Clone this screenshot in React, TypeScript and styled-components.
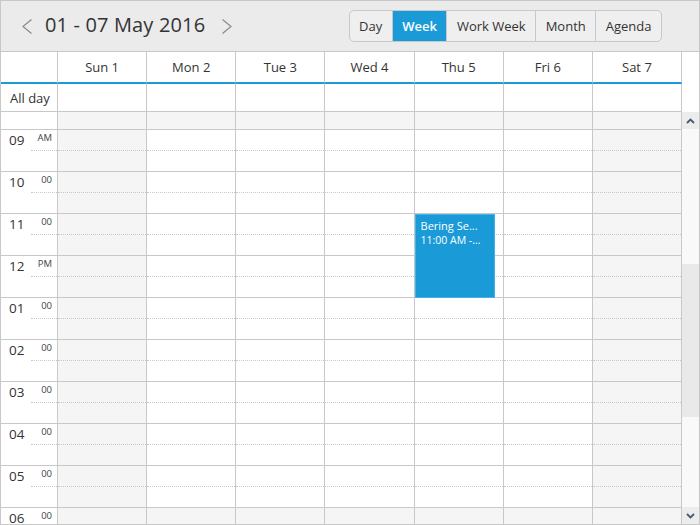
import React from "react";
import styled, { createGlobalStyle } from "styled-components";

const LINE = "#c8c8c8";
const BLUE = "#1a9bd7";
const FONT = '"Open Sans", "Segoe UI", "Noto Sans", sans-serif';

const GlobalStyle = createGlobalStyle`
  html, body { margin: 0; padding: 0; background: #fff; }
  * { box-sizing: border-box; }
`;

const Scheduler = styled.div`
  width: 700px;
  height: 525px;
  border: 1px solid ${LINE};
  display: flex;
  flex-direction: column;
  overflow: hidden;
  font-family: ${FONT};
  color: #333;
`;

const Toolbar = styled.div`
  height: 51px;
  flex: none;
  background: #ebebeb;
  border-bottom: 1px solid ${LINE};
  display: flex;
  align-items: center;
  justify-content: space-between;
  padding: 0 37px 0 21px;
`;

const DateNav = styled.div`
  display: flex;
  align-items: center;
`;

const NavArrow = styled.button`
  border: 0;
  background: transparent;
  padding: 0;
  width: 10px;
  height: 16px;
  display: flex;
  align-items: center;
  justify-content: center;
  cursor: pointer;
`;

const DateText = styled.div`
  font-size: 20px;
  line-height: 24px;
  padding-bottom: 3px;
  color: #333;
  margin: 0 17px 0 13px;
  letter-spacing: 0.15px;
`;

const ViewGroup = styled.div`
  display: flex;
  height: 32px;
  border: 1px solid ${LINE};
  border-radius: 5px;
  overflow: hidden;
  background: #efefef;
`;

const ViewButton = styled.button<{ $active?: boolean }>`
  border: 0;
  border-left: 1px solid ${LINE};
  &:first-child { border-left: 0; }
  padding: 0 9.5px;
  font-family: ${FONT};
  font-size: 13px;
  font-weight: ${(p) => (p.$active ? 600 : 400)};
  color: ${(p) => (p.$active ? "#fff" : "#333")};
  background: ${(p) => (p.$active ? BLUE : "transparent")};
  cursor: pointer;
`;

const HeaderRow = styled.div`
  display: flex;
  flex: none;
  height: 32px;
`;

const AllDayRow = styled.div`
  display: flex;
  flex: none;
  height: 28px;
`;

const CornerCell = styled.div<{ $accent?: boolean }>`
  width: 57px;
  flex: none;
  border-right: 1px solid ${LINE};
  border-bottom: ${(p) => (p.$accent ? `2px solid ${BLUE}` : `1px solid ${LINE}`)};
  display: flex;
  align-items: center;
  padding-left: 9px;
  font-size: 13px;
`;

const DayHeader = styled.div<{ $accent?: boolean }>`
  flex: 1;
  min-width: 0;
  border-right: 1px solid ${LINE};
  border-bottom: ${(p) => (p.$accent ? `2px solid ${BLUE}` : `1px solid ${LINE}`)};
  display: flex;
  align-items: center;
  justify-content: center;
  padding-bottom: 1px;
  font-size: 13px;
  color: #333;
  background: #fff;
`;

const SideSpacer = styled.div`
  width: 17px;
  flex: none;
  background: #fff;
`;

const Body = styled.div`
  flex: 1;
  min-height: 0;
  display: flex;
`;

const Grid = styled.div`
  flex: 1;
  min-width: 0;
  overflow: hidden;
`;

const GridInner = styled.div<{ $offset: number }>`
  margin-top: ${(p) => -p.$offset}px;
`;

const Row = styled.div`
  display: flex;
`;

const TimeCell = styled.div<{ $half?: boolean }>`
  width: 57px;
  flex: none;
  height: ${(p) => (p.$half ? 21 : 42)}px;
  border-right: 1px solid ${LINE};
  border-bottom: 1px solid ${LINE};
  display: flex;
  background: #fff;
`;

const MajorLabel = styled.div`
  width: 30px;
  flex: none;
  padding: 1px 0 0 8px;
  font-size: 13.5px;
  line-height: 18px;
  color: #333;
`;

const MinorArea = styled.div`
  flex: 1;
`;

const MinorLabel = styled.div`
  height: 21px;
  border-bottom: 1px dotted ${LINE};
  text-align: right;
  padding: 2px 5px 0 0;
  font-size: 9.5px;
  line-height: 12px;
  color: #444;
`;

const DayCell = styled.div`
  flex: 1;
  min-width: 0;
  border-right: 1px solid ${LINE};
  position: relative;
`;

const Slot = styled.div<{ $work: boolean; $last: boolean }>`
  height: 21px;
  background: ${(p) => (p.$work ? "#fff" : "#f5f5f5")};
  border-bottom: 1px ${(p) => (p.$last ? "solid" : "dotted")} ${LINE};
`;

const Event = styled.div`
  position: absolute;
  top: 0;
  left: 0;
  width: 80px;
  height: 84px;
  background: ${BLUE};
  border: 1px solid #3fb3ea;
  color: #fff;
  padding: 3px 5px;
  font-size: 11px;
  line-height: 15px;
  z-index: 2;
`;

const EventLine = styled.div`
  white-space: nowrap;
`;

const EventTime = styled(EventLine)`
  font-size: 10.5px;
`;

const Scrollbar = styled.div`
  width: 17px;
  flex: none;
  background: #f9f9f9;
  display: flex;
  flex-direction: column;
`;

const ScrollButton = styled.div`
  height: 17px;
  flex: none;
  background: #ececec;
  display: flex;
  align-items: center;
  justify-content: center;
`;

const Track = styled.div`
  flex: 1;
`;

const Thumb = styled.div`
  height: 153px;
  background: #e9e9e9;
`;

const days = ["Sun 1", "Mon 2", "Tue 3", "Wed 4", "Thu 5", "Fri 6", "Sat 7"];

const hours = [
  { h: 9, major: "09", minor: "AM" },
  { h: 10, major: "10", minor: "00" },
  { h: 11, major: "11", minor: "00" },
  { h: 12, major: "12", minor: "PM" },
  { h: 13, major: "01", minor: "00" },
  { h: 14, major: "02", minor: "00" },
  { h: 15, major: "03", minor: "00" },
  { h: 16, major: "04", minor: "00" },
  { h: 17, major: "05", minor: "00" },
  { h: 18, major: "06", minor: "00" },
];

const isWork = (day: number, hour: number) => day >= 1 && day <= 5 && hour >= 9 && hour < 18;

const Chevron = ({ dir }: { dir: "left" | "right" }) => (
  <svg width="10" height="15" viewBox="0 0 10 15">
    <polyline
      points={dir === "left" ? "9.5,0.5 1,7.5 9.5,14.5" : "0.5,0.5 9,7.5 0.5,14.5"}
      fill="none"
      stroke="#8a8a8a"
      strokeWidth="1.2"
    />
  </svg>
);

const SmallArrow = ({ up }: { up: boolean }) => (
  <svg width="9" height="6" viewBox="0 0 9 6">
    <polyline
      points={up ? "1,5 4.5,1.5 8,5" : "1,1 4.5,4.5 8,1"}
      fill="none"
      stroke="#4a5a6a"
      strokeWidth="1.8"
    />
  </svg>
);

export default function App() {
  return (
    <>
      <GlobalStyle />
      <Scheduler>
        <Toolbar>
          <DateNav>
            <NavArrow aria-label="previous">
              <Chevron dir="left" />
            </NavArrow>
            <DateText>01 - 07 May 2016</DateText>
            <NavArrow aria-label="next">
              <Chevron dir="right" />
            </NavArrow>
          </DateNav>
          <ViewGroup>
            <ViewButton>Day</ViewButton>
            <ViewButton $active>Week</ViewButton>
            <ViewButton>Work Week</ViewButton>
            <ViewButton>Month</ViewButton>
            <ViewButton>Agenda</ViewButton>
          </ViewGroup>
        </Toolbar>

        <HeaderRow>
          <CornerCell $accent />
          {days.map((d) => (
            <DayHeader key={d} $accent>
              {d}
            </DayHeader>
          ))}
          <SideSpacer />
        </HeaderRow>

        <AllDayRow>
          <CornerCell>All day</CornerCell>
          {days.map((d) => (
            <DayHeader key={d} />
          ))}
          <SideSpacer />
        </AllDayRow>

        <Body>
          <Grid>
            <GridInner $offset={3}>
              <Row>
                <TimeCell $half />
                {days.map((d, i) => (
                  <DayCell key={d}>
                    <Slot $work={isWork(i, 8)} $last />
                  </DayCell>
                ))}
              </Row>
              {hours.map((hr) => (
                <Row key={hr.h}>
                  <TimeCell>
                    <MajorLabel>{hr.major}</MajorLabel>
                    <MinorArea>
                      <MinorLabel>{hr.minor}</MinorLabel>
                    </MinorArea>
                  </TimeCell>
                  {days.map((d, i) => (
                    <DayCell key={d}>
                      <Slot $work={isWork(i, hr.h)} $last={false} />
                      <Slot $work={isWork(i, hr.h)} $last />
                      {i === 4 && hr.h === 11 && (
                        <Event>
                          <EventLine>Bering Se...</EventLine>
                          <EventTime>11:00 AM -...</EventTime>
                        </Event>
                      )}
                    </DayCell>
                  ))}
                </Row>
              ))}
            </GridInner>
          </Grid>
          <Scrollbar>
            <ScrollButton>
              <SmallArrow up />
            </ScrollButton>
            <Track>
              <Thumb style={{ marginTop: 135 }} />
            </Track>
            <ScrollButton>
              <SmallArrow up={false} />
            </ScrollButton>
          </Scrollbar>
        </Body>
      </Scheduler>
    </>
  );
}
